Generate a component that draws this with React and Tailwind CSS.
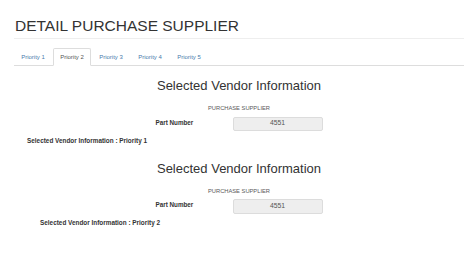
const tabs = ['Priority 1', 'Priority 2', 'Priority 3', 'Priority 4', 'Priority 5'];

const VendorBlock = ({ priority, labelIndent, headingTop, subTop, rowTop, rowHeight, labelTop }) => {
  return (
    <div>
      <h2 className={`${headingTop} text-center text-[13px] leading-none text-[#333]`}>
        Selected Vendor Information
      </h2>
      <p className={`${subTop} text-center text-[5.75px] leading-none text-[#5a5a5a]`}>
        PURCHASE SUPPLIER
      </p>
      <div className={`${rowTop} flex justify-center items-center`}>
        <label className="w-[77px] -mt-[2px] text-[6.3px] leading-none font-bold text-[#333]">
          Part Number
        </label>
        <div
          className={`w-[90px] ${rowHeight} flex items-center justify-center rounded-[2px] border border-[#dcdcdc] bg-[#eeeeee] text-[6.8px] leading-none text-[#555]`}
        >
          4551
        </div>
      </div>
      <p className={`${labelTop} ${labelIndent} text-[6.4px] leading-none font-bold text-[#333]`}>
        Selected Vendor Information : Priority {priority}
      </p>
    </div>
  );
};

export default function App() {
  return (
    <div
      className="w-[474px] h-[268px] bg-white overflow-hidden"
      style={{ fontFamily: '"Liberation Sans", Arial, sans-serif' }}
    >
      <div className="ml-[14px] w-[450px]">
        <div className="h-[39px] pt-[18px] pl-px border-b border-[#eeeeee]">
          <h1 className="text-[15.5px] leading-none text-[#333]">DETAIL PURCHASE SUPPLIER</h1>
        </div>

        <ul className="mt-[9px] flex border-b border-[#dddddd]">
          {tabs.map((t, i) => (
            <li key={t} className="-mb-px mr-px">
              <span
                className={
                  i === 1
                    ? 'flex items-center h-[18px] w-[38px] justify-center rounded-t-[2px] border border-[#dddddd] border-b-white bg-white text-[6px] leading-none text-[#555]'
                    : 'flex items-center h-[18px] w-[38px] justify-center border border-transparent text-[6px] leading-none text-[#4a7bab]'
                }
              >
                {t}
              </span>
            </li>
          ))}
        </ul>

        <VendorBlock
          priority={1}
          labelIndent="pl-[13px]"
          headingTop="mt-[13px]"
          subTop="mt-[14px]"
          rowTop="mt-[5px]"
          rowHeight="h-[14px]"
          labelTop="mt-[7px]"
        />
        <VendorBlock
          priority={2}
          labelIndent="pl-[26px]"
          headingTop="mt-[17.5px]"
          subTop="mt-[14.5px]"
          rowTop="mt-[4px]"
          rowHeight="h-[15px]"
          labelTop="mt-[6px]"
        />
      </div>
    </div>
  );
}
